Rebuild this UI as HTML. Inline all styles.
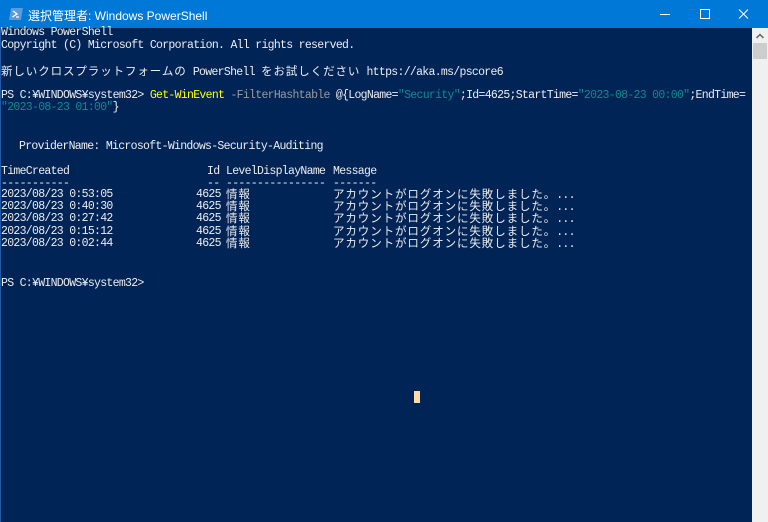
<!DOCTYPE html>
<html><head><meta charset="utf-8"><style>
html,body{margin:0;padding:0;}
body{width:768px;height:522px;overflow:hidden;background:#012456;position:relative;font-family:"Liberation Mono","Noto Sans CJK JP",monospace;}
#tb{position:absolute;left:0;top:0;width:768px;height:28px;background:#0078d7;color:#fff;font-family:"Liberation Sans","Noto Sans CJK JP",sans-serif;font-size:12px;}
#tb .t{position:absolute;left:28px;top:7px;}
#sb{position:absolute;left:752px;top:28px;width:16px;height:494px;background:#f0f0f0;}
#edge{position:absolute;left:0;top:28px;width:1px;height:494px;background:#1e5aa8;}
.l{position:absolute;white-space:pre;font-size:11.5px;letter-spacing:-0.7px;line-height:12px;color:#eeedf0;}
.j{letter-spacing:0.9px;font-family:"Noto Sans CJK JP",sans-serif;}
.y{color:#ffff00}.g{color:#9a9a9a}.c{color:#0f8a8f}
#cur{position:absolute;left:414px;top:391px;width:6px;height:12px;background:#fedba9;}
</style></head><body>
<div id="tb">
<svg style="position:absolute;left:9px;top:8px" width="14" height="12" viewBox="0 0 14 12"><path d="M2 0H14L12 12H0Z" fill="#5a9bd8"/><path d="M4 3L8 6L3.5 9" stroke="#fff" stroke-width="1.3" fill="none"/><path d="M7 9H10" stroke="#fff" stroke-width="1.2"/></svg>
<span class="t">選択管理者: Windows PowerShell</span>
<svg style="position:absolute;left:656px;top:8px" width="100" height="12" viewBox="0 0 100 12"><path d="M4 6.5H14" stroke="#fff"/><path d="M44.5 1.5h9v9h-9z" stroke="#fff" fill="none"/><path d="M83 1.5l9 9M92 1.5l-9 9" stroke="#fff"/></svg>
</div>
<div id="edge"></div>
<div id="sb">
<svg style="position:absolute;left:4px;top:5px" width="8" height="6"><path d="M0.5 5L4 1.5L7.5 5" stroke="#606060" stroke-width="1.5" fill="none"/></svg>
<div style="position:absolute;left:1px;top:15px;width:14px;height:16px;background:#cdcdcd"></div>
</div>
<div class="l" style="left:1px;top:27px">Windows PowerShell</div>
<div class="l" style="left:1px;top:40px">Copyright (C) Microsoft Corporation. All rights reserved.</div>
<div class="l" style="left:1px;top:65px"><span class="j">新しいクロスプラットフォームの</span> PowerShell <span class="j">をお試しください</span> https://aka.ms/pscore6</div>
<div class="l" style="left:1px;top:90px">PS C:¥WINDOWS¥system32&gt; <span class="y">Get-WinEvent</span> <span class="g">-FilterHashtable</span> @{LogName=<span class="c">"Security"</span>;Id=4625;StartTime=<span class="c">"2023-08-23 00:00"</span>;EndTime=</div>
<div class="l" style="left:1px;top:102px"><span class="c">"2023-08-23 01:00"</span>}</div>
<div class="l" style="left:19px;top:141px">ProviderName: Microsoft-Windows-Security-Auditing</div>
<div class="l" style="left:1px;top:166px">TimeCreated</div><div class="l" style="left:207px;top:166px">Id</div><div class="l" style="left:226px;top:166px">LevelDisplayName</div><div class="l" style="left:333px;top:166px">Message</div>
<div class="l" style="left:1px;top:178px">-----------</div><div class="l" style="left:207px;top:178px">--</div><div class="l" style="left:226px;top:178px">----------------</div><div class="l" style="left:333px;top:178px">-------</div>
<div class="l" style="left:1px;top:189px">2023/08/23 0:53:05</div><div class="l" style="left:196px;top:189px">4625</div><div class="l j" style="left:226px;top:188px">情報</div><div class="l" style="left:333px;top:188px"><span class="j">アカウントがログオンに失敗しました。</span>...</div>
<div class="l" style="left:1px;top:201px">2023/08/23 0:40:30</div><div class="l" style="left:196px;top:201px">4625</div><div class="l j" style="left:226px;top:200px">情報</div><div class="l" style="left:333px;top:200px"><span class="j">アカウントがログオンに失敗しました。</span>...</div>
<div class="l" style="left:1px;top:213px">2023/08/23 0:27:42</div><div class="l" style="left:196px;top:213px">4625</div><div class="l j" style="left:226px;top:212px">情報</div><div class="l" style="left:333px;top:212px"><span class="j">アカウントがログオンに失敗しました。</span>...</div>
<div class="l" style="left:1px;top:226px">2023/08/23 0:15:12</div><div class="l" style="left:196px;top:226px">4625</div><div class="l j" style="left:226px;top:225px">情報</div><div class="l" style="left:333px;top:225px"><span class="j">アカウントがログオンに失敗しました。</span>...</div>
<div class="l" style="left:1px;top:238px">2023/08/23 0:02:44</div><div class="l" style="left:196px;top:238px">4625</div><div class="l j" style="left:226px;top:237px">情報</div><div class="l" style="left:333px;top:237px"><span class="j">アカウントがログオンに失敗しました。</span>...</div>
<div class="l" style="left:1px;top:278px">PS C:¥WINDOWS¥system32&gt;</div>
<div id="cur"></div>
</body></html>
